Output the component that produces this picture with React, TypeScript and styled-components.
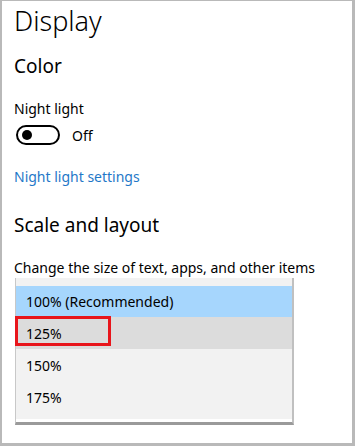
import React from "react";
import styled, { createGlobalStyle } from "styled-components";

const GlobalStyle = createGlobalStyle`
  html, body {
    margin: 0;
    padding: 0;
    background: #ffffff;
  }
`;

const Frame = styled.div`
  box-sizing: border-box;
  width: 355px;
  height: 446px;
  background: #ffffff;
  border-style: solid;
  border-color: #b9b9b9;
  border-width: 1px 3px 3px 2px;
  padding: 0 0 0 12px;
  font-family: "Noto Sans", "Open Sans", sans-serif;
  color: #000000;
  overflow: hidden;
`;

const PageTitle = styled.h1`
  margin: 0;
  padding-top: 2px;
  font-size: 27px;
  font-weight: 300;
  line-height: 36px;
`;

const SectionTitle = styled.h2<{ $top: number }>`
  margin: ${({ $top }) => $top}px 0 0 0;
  font-size: 19px;
  font-weight: 400;
  line-height: 26px;
`;

const Label = styled.div<{ $top: number }>`
  margin-top: ${({ $top }) => $top}px;
  font-size: 14px;
  line-height: 20px;
`;

const ToggleRow = styled.div`
  display: flex;
  align-items: center;
  gap: 12px;
  margin-top: 6px;
  padding-left: 2px;
  font-size: 14px;
`;

const Toggle = styled.div`
  box-sizing: border-box;
  width: 44px;
  height: 20px;
  border: 2px solid #000000;
  border-radius: 10px;
  display: flex;
  align-items: center;
  padding-left: 4px;
`;

const Knob = styled.span`
  width: 10px;
  height: 10px;
  border-radius: 50%;
  background: #000000;
`;

const Link = styled.a`
  display: block;
  margin-top: 22px;
  font-size: 14px;
  line-height: 20px;
  color: #1f78c8;
  text-decoration: none;
`;

const Dropdown = styled.div`
  box-sizing: border-box;
  width: 279px;
  margin-top: 0;
  margin-left: 1px;
  padding: 8px 0 6px 0;
  background: #f2f2f2;
  border-left: 1px solid #c8c8c8;
  border-right: 2px solid #c0c0c0;
`;

const Option = styled.div<{ $bg: string; $h: number }>`
  position: relative;
  height: ${({ $h }) => $h}px;
  display: flex;
  align-items: center;
  padding-left: 10px;
  background: ${({ $bg }) => $bg};
  font-size: 14px;
`;

const Highlight = styled.span`
  position: absolute;
  left: -1px;
  top: -1px;
  width: 96px;
  height: 30px;
  box-sizing: border-box;
  border: 3px solid #e8151b;
`;

const Tail = styled.div`
  box-sizing: border-box;
  width: 279px;
  height: 6px;
  margin-left: 1px;
  background: #ffffff;
  border-left: 1px solid #c8c8c8;
  border-right: 2px solid #c0c0c0;
  border-bottom: 3px solid #9a9a9a;
`;

export default function App() {
  return (
    <>
      <GlobalStyle />
      <Frame>
        <PageTitle>Display</PageTitle>
        <SectionTitle $top={14}>Color</SectionTitle>
        <Label $top={20}>Night light</Label>
        <ToggleRow>
          <Toggle>
            <Knob />
          </Toggle>
          <span>Off</span>
        </ToggleRow>
        <Link>Night light settings</Link>
        <SectionTitle $top={25}>Scale and layout</SectionTitle>
        <Label $top={20}>Change the size of text, apps, and other items</Label>
        <Dropdown>
          <Option $bg="#a6d6fd" $h={31}>100% (Recommended)</Option>
          <Option $bg="#dcdcdc" $h={32}>
            <Highlight />
            125%
          </Option>
          <Option $bg="#f2f2f2" $h={33}>150%</Option>
          <Option $bg="#f2f2f2" $h={31}>175%</Option>
        </Dropdown>
        <Tail />
      </Frame>
    </>
  );
}
